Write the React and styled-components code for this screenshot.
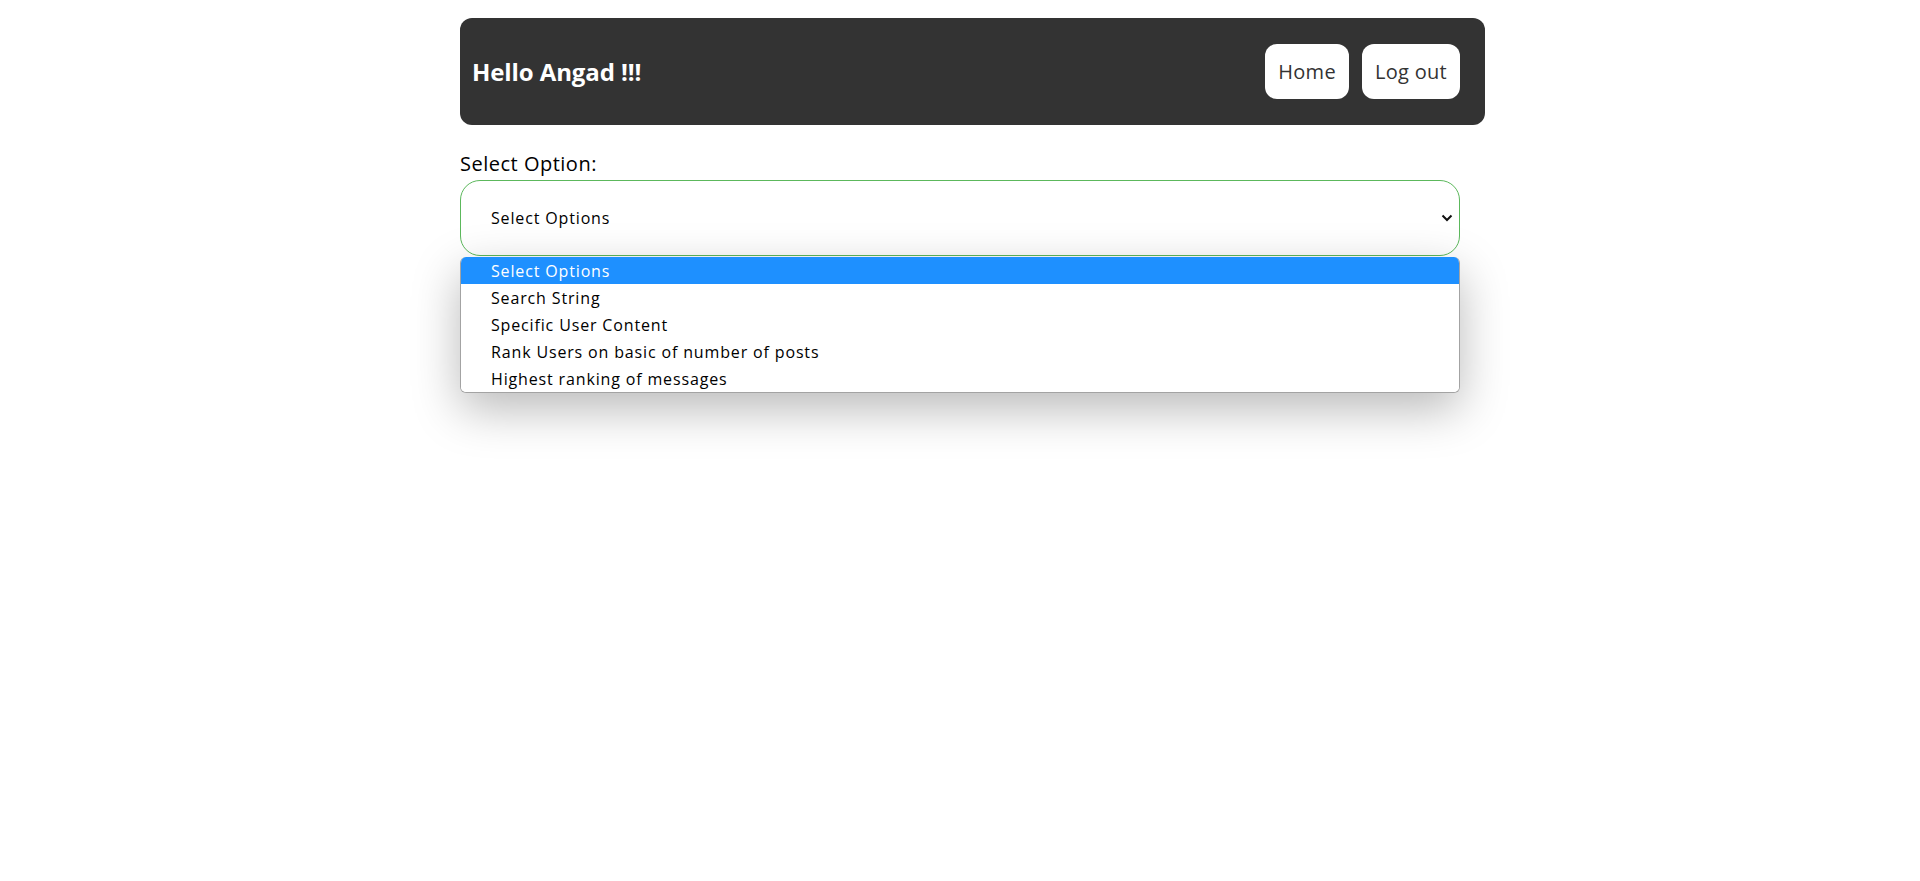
import styled, { createGlobalStyle } from "styled-components";

const GlobalStyle = createGlobalStyle`
  body {
    margin: 0;
    background: #fff;
    font-family: "Open Sans", "Liberation Sans", sans-serif;
  }
`;

const Page = styled.div`
  width: 1000px;
  margin: 0 auto;
  padding: 18px 0 120px;
`;

const Header = styled.header`
  width: calc(100% + 25px);
  height: 107px;
  box-sizing: border-box;
  padding: 0 25px 0 12px;
  background: #333;
  border-radius: 12px;
  display: flex;
  align-items: center;
  justify-content: space-between;
  h2 {
    margin: 0;
    color: #fff;
    font-size: 24px;
    font-weight: 700;
    letter-spacing: -0.1px;
  }
`;

const Nav = styled.nav`
  display: flex;
  gap: 13px;
`;

const NavButton = styled.button`
  height: 55px;
  padding: 0 13px;
  border: none;
  border-radius: 12px;
  background: #fff;
  color: #333;
  font-family: inherit;
  font-size: 20px;
  letter-spacing: 0.3px;
  cursor: pointer;
`;

const Label = styled.label`
  display: block;
  margin: 24px 0 1px;
  font-size: 20px;
  letter-spacing: 0.5px;
  line-height: 30px;
  color: #000;
`;

const SelectBox = styled.div`
  height: 76px;
  box-sizing: border-box;
  padding: 0 6px 0 30px;
  border: 1px solid #5cb85c;
  border-radius: 20px;
  display: flex;
  align-items: center;
  justify-content: space-between;
  font-size: 16px;
  letter-spacing: 0.85px;
  color: #000;
  background: #fff;
`;

const Options = styled.ul`
  position: relative;
  z-index: 1;
  margin: 1px 0 0;
  padding: 0;
  list-style: none;
  background: #fff;
  border: 1px solid #a3a3a3;
  border-top: none;
  border-radius: 6px;
  overflow: hidden;
  box-shadow: 0 16px 48px rgba(0, 0, 0, 0.28);
`;

const Option = styled.li`
  height: 27px;
  line-height: 28px;
  padding-left: 30px;
  font-size: 16px;
  letter-spacing: 0.85px;
  color: ${(p) => (p.$active ? "#fff" : "#000")};
  background: ${(p) => (p.$active ? "#1e90ff" : "#fff")};
`;

const options = [
  "Select Options",
  "Search String",
  "Specific User Content",
  "Rank Users on basic of number of posts",
  "Highest ranking of messages",
];

const App = () => {
  return (
    <>
      <GlobalStyle />
      <Page>
        <Header>
          <h2>Hello Angad !!!</h2>
          <Nav>
            <NavButton type="button">Home</NavButton>
            <NavButton type="button">Log out</NavButton>
          </Nav>
        </Header>
        <Label>Select Option:</Label>
        <SelectBox>
          <span>Select Options</span>
          <svg width="12" height="8" viewBox="0 0 12 8">
            <polyline points="1.5,1.5 6,6 10.5,1.5" fill="none" stroke="#111" strokeWidth="2" />
          </svg>
        </SelectBox>
        <Options>
          {options.map((o, i) => (
            <Option key={o} $active={i === 0}>{o}</Option>
          ))}
        </Options>
      </Page>
    </>
  );
};

export default App;
